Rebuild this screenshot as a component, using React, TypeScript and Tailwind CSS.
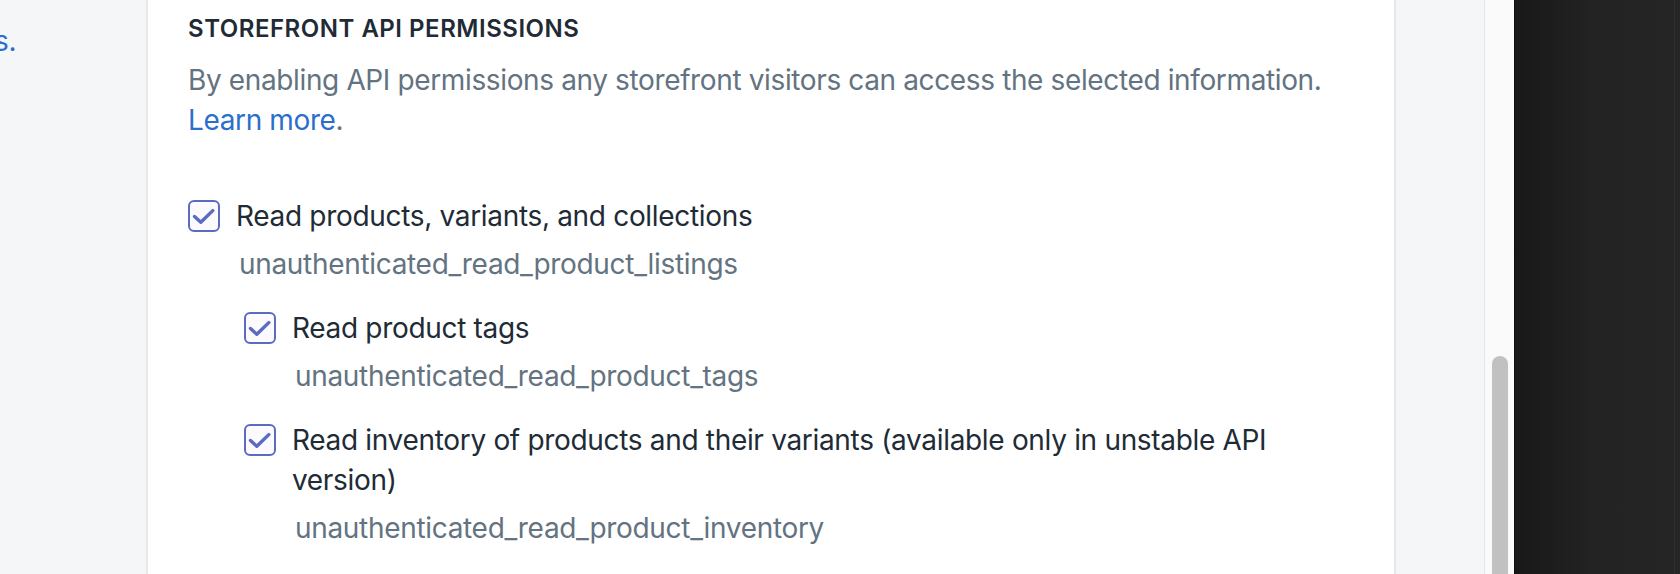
import React from "react";

function Check() {
  return (
    <span className="flex h-[32px] w-[32px] shrink-0 items-center justify-center rounded-[6px] border-2 border-[#5c6ac4] bg-[#fbfbfd]">
      <svg width="32" height="32" viewBox="0 0 32 32" className="-m-[2px]">
        <path d="M6.5 16.5 L12.8 22.3 L24.8 10.6" fill="none" stroke="#5c6ac4" strokeWidth="3.4" strokeLinecap="round" strokeLinejoin="round" />
      </svg>
    </span>
  );
}

function Item({ label, code, first }: { label: React.ReactNode; code: string; first?: boolean }) {
  return (
    <div className={first ? "" : "mt-[24px]"}>
      <div className="flex items-start gap-[16px]">
        <div className="flex h-[40px] items-center">
          <Check />
        </div>
        <div className="text-[28px] leading-[40px] text-[#212b36]">{label}</div>
      </div>
      <div className="mt-[8px] pl-[51px] text-[28px] leading-[40px] text-[#637381]">{code}</div>
    </div>
  );
}

export default function App() {
  return (
    <div
      className="flex h-[574px] w-[1680px] overflow-hidden bg-[#f4f6f8] tracking-[-0.32px]"
      style={{ fontFamily: "Inter, 'Noto Sans', sans-serif" }}
    >
      <div className="w-[146px] shrink-0 overflow-hidden">
        <p className="-ml-[6px] mt-[21px] text-[28px] leading-[40px] text-[#2c6ecb]">s.</p>
      </div>
      <div className="w-[1250px] shrink-0 border-x-2 border-[#e6e8eb] bg-white px-[40px] pt-[13px]">
        <h2 className="text-[24px] font-semibold uppercase leading-[32px] tracking-[0.52px] text-[#212b36]">
          Storefront API permissions
        </h2>
        <p className="mt-[15px] text-[28px] leading-[40px] tracking-[-0.37px] text-[#637381]">
          By enabling API permissions any storefront visitors can access the selected information.{" "}
          <span className="text-[#2c6ecb]">Learn more</span>.
        </p>
        <div className="mt-[56px]">
          <Item first label="Read products, variants, and collections" code="unauthenticated_read_product_listings" />
          <div className="mt-[24px] pl-[56px]">
            <Item first label="Read product tags" code="unauthenticated_read_product_tags" />
            <Item
              label="Read inventory of products and their variants (available only in unstable API version)"
              code="unauthenticated_read_product_inventory"
            />
          </div>
        </div>
      </div>
      <div className="w-[88px] shrink-0" />
      <div className="flex w-[30px] shrink-0 flex-col border-l border-[#e6e6e6] bg-[#fafafa] pl-[7px] pt-[356px]">
        <div className="w-[16px] flex-1 rounded-t-full bg-[#c1c1c1]" />
      </div>
      <div className="flex flex-1">
        <div className="w-[1px] bg-[#0e0e0e]" />
        <div className="flex-1 bg-gradient-to-r from-[#181818] via-[#232323] to-[#252525]" />
        <div className="w-[1px] bg-[#303030]" />
        <div className="w-[5px] bg-[#262626]" />
      </div>
    </div>
  );
}
